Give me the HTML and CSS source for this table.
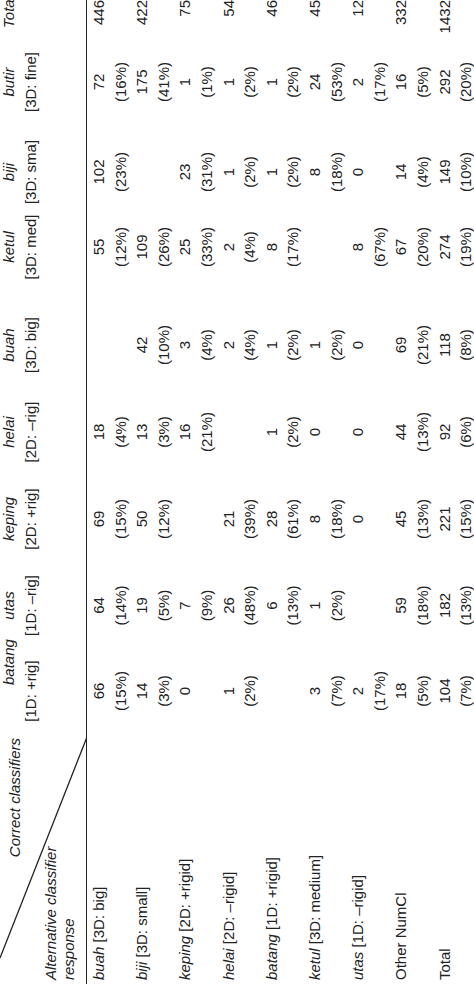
FILE: index.html
```html
<!DOCTYPE html>
<html>
<head>
<meta charset="utf-8">
<link rel="stylesheet" href="styles.css">
</head>
<body>
<div class="page">
  <div class="sheet">
    <div class="head">
      <div class="corner">
        <svg class="diag" width="250" height="87" viewBox="0 0 250 87"><line x1="26" y1="0" x2="247" y2="87" stroke="#222" stroke-width="1.3"/></svg>
        <div class="corner-top">Correct classifiers</div>
        <div class="corner-bottom">Alternative classifier<br>response</div>
      </div>
      <div class="hcell c1"><i class="name-shift">batang</i><span>[1D: +rig]</span></div>
      <div class="hcell c2"><i>utas</i><span>[1D: –rig]</span></div>
      <div class="hcell c3"><i>keping</i><span>[2D: +rig]</span></div>
      <div class="hcell c4"><i>helai</i><span>[2D: –rig]</span></div>
      <div class="hcell c5"><i>buah</i><span>[3D: big]</span></div>
      <div class="hcell c6"><i>ketul</i><span>[3D: med]</span></div>
      <div class="hcell c7"><i>biji</i><span>[3D: sma]</span></div>
      <div class="hcell c8"><i>butir</i><span>[3D: fine]</span></div>
      <div class="hcell c9"><i>Total</i></div>
    </div>
    <div class="body">
      <div class="row">
        <div class="label"><i>buah</i> [3D: big]</div>
        <div class="cell c1"><span>66</span><span>(15%)</span></div>
        <div class="cell c2"><span>64</span><span>(14%)</span></div>
        <div class="cell c3"><span>69</span><span>(15%)</span></div>
        <div class="cell c4"><span>18</span><span>(4%)</span></div>
        <div class="cell c5"></div>
        <div class="cell c6"><span>55</span><span>(12%)</span></div>
        <div class="cell c7"><span>102</span><span>(23%)</span></div>
        <div class="cell c8"><span>72</span><span>(16%)</span></div>
        <div class="cell c9"><span>446</span></div>
      </div>
      <div class="row">
        <div class="label"><i>biji</i> [3D: small]</div>
        <div class="cell c1"><span>14</span><span>(3%)</span></div>
        <div class="cell c2"><span>19</span><span>(5%)</span></div>
        <div class="cell c3"><span>50</span><span>(12%)</span></div>
        <div class="cell c4"><span>13</span><span>(3%)</span></div>
        <div class="cell c5"><span>42</span><span>(10%)</span></div>
        <div class="cell c6"><span>109</span><span>(26%)</span></div>
        <div class="cell c7"></div>
        <div class="cell c8"><span>175</span><span>(41%)</span></div>
        <div class="cell c9"><span>422</span></div>
      </div>
      <div class="row">
        <div class="label"><i>keping</i> [2D: +rigid]</div>
        <div class="cell c1"><span>0</span></div>
        <div class="cell c2"><span>7</span><span>(9%)</span></div>
        <div class="cell c3"></div>
        <div class="cell c4"><span>16</span><span>(21%)</span></div>
        <div class="cell c5"><span>3</span><span>(4%)</span></div>
        <div class="cell c6"><span>25</span><span>(33%)</span></div>
        <div class="cell c7"><span>23</span><span>(31%)</span></div>
        <div class="cell c8"><span>1</span><span>(1%)</span></div>
        <div class="cell c9"><span>75</span></div>
      </div>
      <div class="row">
        <div class="label"><i>helai</i> [2D: –rigid]</div>
        <div class="cell c1"><span>1</span><span>(2%)</span></div>
        <div class="cell c2"><span>26</span><span>(48%)</span></div>
        <div class="cell c3"><span>21</span><span>(39%)</span></div>
        <div class="cell c4"></div>
        <div class="cell c5"><span>2</span><span>(4%)</span></div>
        <div class="cell c6"><span>2</span><span>(4%)</span></div>
        <div class="cell c7"><span>1</span><span>(2%)</span></div>
        <div class="cell c8"><span>1</span><span>(2%)</span></div>
        <div class="cell c9"><span>54</span></div>
      </div>
      <div class="row">
        <div class="label"><i>batang</i> [1D: +rigid]</div>
        <div class="cell c1"></div>
        <div class="cell c2"><span>6</span><span>(13%)</span></div>
        <div class="cell c3"><span>28</span><span>(61%)</span></div>
        <div class="cell c4"><span>1</span><span>(2%)</span></div>
        <div class="cell c5"><span>1</span><span>(2%)</span></div>
        <div class="cell c6"><span>8</span><span>(17%)</span></div>
        <div class="cell c7"><span>1</span><span>(2%)</span></div>
        <div class="cell c8"><span>1</span><span>(2%)</span></div>
        <div class="cell c9"><span>46</span></div>
      </div>
      <div class="row">
        <div class="label"><i>ketul</i> [3D: medium]</div>
        <div class="cell c1"><span>3</span><span>(7%)</span></div>
        <div class="cell c2"><span>1</span><span>(2%)</span></div>
        <div class="cell c3"><span>8</span><span>(18%)</span></div>
        <div class="cell c4"><span>0</span></div>
        <div class="cell c5"><span>1</span><span>(2%)</span></div>
        <div class="cell c6"></div>
        <div class="cell c7"><span>8</span><span>(18%)</span></div>
        <div class="cell c8"><span>24</span><span>(53%)</span></div>
        <div class="cell c9"><span>45</span></div>
      </div>
      <div class="row">
        <div class="label"><i>utas</i> [1D: –rigid]</div>
        <div class="cell c1"><span>2</span><span>(17%)</span></div>
        <div class="cell c2"></div>
        <div class="cell c3"><span>0</span></div>
        <div class="cell c4"><span>0</span></div>
        <div class="cell c5"><span>0</span></div>
        <div class="cell c6"><span>8</span><span>(67%)</span></div>
        <div class="cell c7"><span>0</span></div>
        <div class="cell c8"><span>2</span><span>(17%)</span></div>
        <div class="cell c9"><span>12</span></div>
      </div>
      <div class="row">
        <div class="label">Other NumCl</div>
        <div class="cell c1"><span>18</span><span>(5%)</span></div>
        <div class="cell c2"><span>59</span><span>(18%)</span></div>
        <div class="cell c3"><span>45</span><span>(13%)</span></div>
        <div class="cell c4"><span>44</span><span>(13%)</span></div>
        <div class="cell c5"><span>69</span><span>(21%)</span></div>
        <div class="cell c6"><span>67</span><span>(20%)</span></div>
        <div class="cell c7"><span>14</span><span>(4%)</span></div>
        <div class="cell c8"><span>16</span><span>(5%)</span></div>
        <div class="cell c9"><span>332</span></div>
      </div>
      <div class="row">
        <div class="label">Total</div>
        <div class="cell c1"><span>104</span><span>(7%)</span></div>
        <div class="cell c2"><span>182</span><span>(13%)</span></div>
        <div class="cell c3"><span>221</span><span>(15%)</span></div>
        <div class="cell c4"><span>92</span><span>(6%)</span></div>
        <div class="cell c5"><span>118</span><span>(8%)</span></div>
        <div class="cell c6"><span>274</span><span>(19%)</span></div>
        <div class="cell c7"><span>149</span><span>(10%)</span></div>
        <div class="cell c8"><span>292</span><span>(20%)</span></div>
        <div class="cell c9"><span>1432</span></div>
      </div>
    </div>
  </div>
</div>
</body>
</html>
```

FILE: styles.css
```css
html, body {
  margin: 0;
  padding: 0;
  background: #fff;
}
.page {
  width: 474px;
  height: 984px;
  overflow: hidden;
  position: relative;
}
.sheet {
  width: 984px;
  height: 474px;
  overflow: hidden;
  transform-origin: 0 0;
  transform: translateY(984px) rotate(-90deg);
  font-family: "Liberation Sans", Arial, sans-serif;
  font-size: 15px;
  color: #222;
  background: #fff;
}
.head, .row {
  display: grid;
  grid-template-columns: 250px 86px 85px 88px 86px 88px 92px 74px 96px 39px;
  width: 984px;
}
.head {
  height: 86px;
  border-bottom: 1px solid #222;
  line-height: 21.7px;
}
.corner {
  position: relative;
}
.diag {
  position: absolute;
  left: 0;
  top: 0;
}
.corner-top {
  font-style: italic;
  text-align: right;
  padding-right: 4px;
  margin-top: 4px;
}
.corner-bottom {
  font-style: italic;
  line-height: 18px;
  margin-top: 16px;
  padding-left: 4px;
}
.hcell {
  margin-top: -2px;
  text-align: center;
  white-space: nowrap;
}
.hcell i, .hcell span {
  display: block;
}
.hcell .name-shift {
  text-align: left;
  padding-left: 49px;
}
.body {
  padding-top: 1px;
}
.row {
  line-height: 21.6px;
  height: 43.2px;
}
.label {
  padding-left: 4px;
  white-space: nowrap;
}
.cell {
  text-align: center;
  white-space: nowrap;
}
.cell span {
  display: block;
}
.c6 {
  padding-left: 16px;
}
.c8 {
  padding-left: 10px;
}
.c9 {
  text-align: right;
}
.hcell.c9 {
  text-align: right;
  margin-right: -4px;
}
```
